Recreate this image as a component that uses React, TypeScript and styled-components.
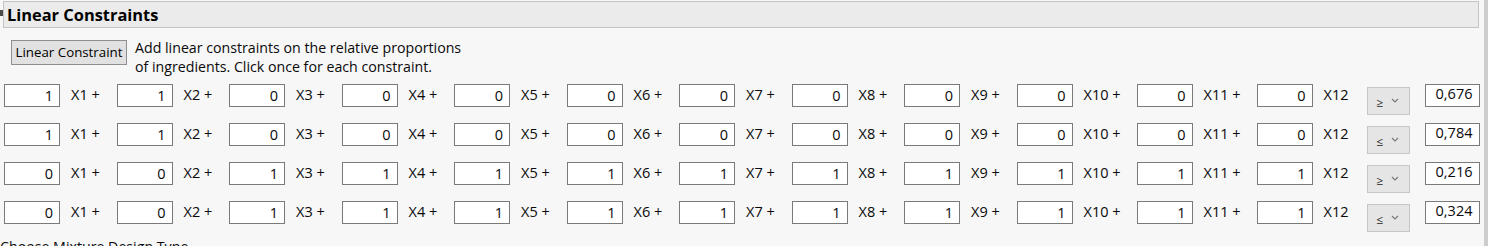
import React from "react";
import styled, { createGlobalStyle } from "styled-components";

const Global = createGlobalStyle`
  html, body { margin: 0; padding: 0; background: #f7f7f7; }
  body { font-family: "Open Sans", "Noto Sans", sans-serif; color: #000; overflow: hidden; }
`;

const Page = styled.div`
  display: flex;
  width: 1488px;
  height: 246px;
  overflow: hidden;
`;

const Main = styled.div`
  flex: 1;
  display: flex;
  flex-direction: column;
  padding-top: 1px;
`;

const ScrollStrip = styled.div`
  width: 4px;
  background: #cdcdcd;
`;

const HeaderRow = styled.div`
  display: flex;
  align-items: flex-start;
`;

const Disclosure = styled.div`
  width: 3px;
  height: 6px;
  margin-top: 9px;
  background: #4a4a4a;
`;

const HeaderBox = styled.div`
  width: 1476px;
  height: 27px;
  box-sizing: border-box;
  border: 1px solid #c3c3c3;
  background: #ebebeb;
  display: flex;
  align-items: center;
  padding-left: 3px;
  font-weight: 700;
  font-size: 16.4px;
  color: #000;
`;

const Intro = styled.div`
  display: flex;
  align-items: flex-start;
  gap: 8px;
  margin: 12px 0 0 11px;
`;

const Button = styled.button`
  width: 116px;
  height: 25px;
  box-sizing: border-box;
  border: 1px solid #8e8e8e;
  background: #e1e1e1;
  font-family: inherit;
  font-size: 13.3px;
  color: #000;
  padding: 0;
  margin: 0;
  line-height: 1;
  white-space: nowrap;
`;

const Description = styled.div`
  font-size: 14.2px;
  line-height: 19px;
  margin-top: -2px;
  color: #0a0a0a;
`;

const Rows = styled.div`
  display: flex;
  flex-direction: column;
  gap: 16px;
  margin: 8px 0 0 4px;
`;

const Row = styled.div`
  display: flex;
  align-items: flex-start;
  height: 23px;
`;

const NumBox = styled.div<{ $w?: number }>`
  width: ${(p) => p.$w ?? 56}px;
  height: 23px;
  box-sizing: border-box;
  border: 1px solid #7a7a7a;
  background: #fff;
  font-size: 14.5px;
  line-height: 21px;
  text-align: right;
  padding-right: 6px;
  color: #0a0a0a;
  flex: none;
`;

const Term = styled.span<{ $w: number; $ml?: number }>`
  width: ${(p) => p.$w}px;
  margin-left: ${(p) => p.$ml ?? 11}px;
  flex: none;
  font-size: 14.5px;
  line-height: 22px;
  white-space: nowrap;
  color: #0a0a0a;
`;

const Select = styled.div`
  width: 43px;
  height: 28px;
  margin-top: 3px;
  box-sizing: border-box;
  border: 1px solid #c6c6c6;
  background: #e5e5e5;
  display: flex;
  align-items: flex-end;
  padding: 0 0 7px 9px;
  flex: none;
`;

const Op = styled.span`
  font-size: 12px;
  line-height: 9px;
  width: 14px;
  color: #222;
`;

const Value = styled(NumBox)`
  margin-left: 15px;
  line-height: 18px;
`;

const Footer = styled.div`
  margin-top: 13px;
  font-size: 14.2px;
  line-height: 19px;
  color: #0a0a0a;
`;

const Chevron = () => (
  <svg width="8" height="5" viewBox="0 0 8 5" style={{ marginBottom: 4 }}>
    <path d="M1 1 L4 4 L7 1" fill="none" stroke="#7a7a7a" strokeWidth="1.2" />
  </svg>
);

const rows: { c: number[]; op: string; v: string }[] = [
  { c: [1, 1, 0, 0, 0, 0, 0, 0, 0, 0, 0, 0], op: "≥", v: "0,676" },
  { c: [1, 1, 0, 0, 0, 0, 0, 0, 0, 0, 0, 0], op: "≤", v: "0,784" },
  { c: [0, 0, 1, 1, 1, 1, 1, 1, 1, 1, 1, 1], op: "≥", v: "0,216" },
  { c: [0, 0, 1, 1, 1, 1, 1, 1, 1, 1, 1, 1], op: "≤", v: "0,324" },
];

const termWidth = (i: number) => (i < 9 ? 45.5 : i < 11 ? 53 : 43);

export default function App() {
  return (
    <>
      <Global />
      <Page>
        <Main>
          <HeaderRow>
            <Disclosure />
            <HeaderBox>Linear Constraints</HeaderBox>
          </HeaderRow>
          <Intro>
            <Button>Linear Constraint</Button>
            <Description>
              Add linear constraints on the relative proportions
              <br />
              of ingredients. Click once for each constraint.
            </Description>
          </Intro>
          <Rows>
            {rows.map((r, ri) => (
              <Row key={ri}>
                {r.c.map((c, i) => (
                  <React.Fragment key={i}>
                    <NumBox>{c}</NumBox>
                    <Term $w={termWidth(i)}>{`X${i + 1}${i < 11 ? " +" : ""}`}</Term>
                  </React.Fragment>
                ))}
                <Select>
                  <Op>{r.op}</Op>
                  <Chevron />
                </Select>
                <Value $w={55}>{r.v}</Value>
              </Row>
            ))}
          </Rows>
          <Footer>Choose Mixture Design Type</Footer>
        </Main>
        <ScrollStrip />
      </Page>
    </>
  );
}
